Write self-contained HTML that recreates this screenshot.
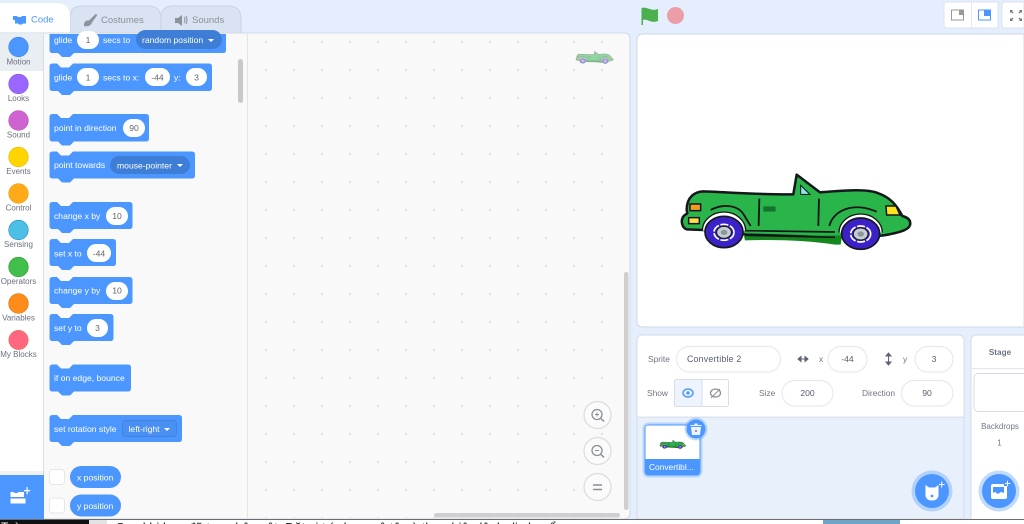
<!DOCTYPE html>
<html><head><meta charset="utf-8"><style>
html,body{margin:0;padding:0;width:1024px;height:524px;overflow:hidden;background:#e4eefc}
svg{display:block;position:absolute;left:0;top:0;filter:blur(.35px)}
text{font-family:"Liberation Sans","Noto Sans CJK SC",sans-serif}
.c{font-size:8px;fill:#6b7080;text-anchor:middle}
.b{font-size:8.6px;fill:#fff}
.n{font-size:8.6px;fill:#666;text-anchor:middle}
.l{font-size:8.4px;fill:#6f7484}
.v{font-size:8.6px;fill:#575e75;text-anchor:middle}
.blk{fill:#4c97ff}
.p{fill:#fff;stroke:none}
.d{fill:#3f7ed6}
.i{fill:#fff;stroke:#e6eaf0;stroke-width:1.2}
</style></head><body>
<svg width="1024" height="524" viewBox="0 0 1024 524">
<defs>
<pattern id="dots" x="0" y="0" width="28" height="28" patternUnits="userSpaceOnUse"><circle cx="14" cy="14" r="1" fill="#d9d9d9"/></pattern>
<g id="car">
  <path d="M50 150C50 110 75 95 100 94C170 96 250 104 370 103L380 44L450 97C520 92 590 85 625 100C660 112 680 135 697 168C712 172 724 180 720 196C714 212 680 220 635 227L505 232L230 224L100 210L50 208C36 204 30 180 42 167L52 160Z" fill="#2ab54b" stroke="#15181a" stroke-width="7.500" stroke-linejoin="round"/>
  <path d="M222 228L225 241C320 238 420 242 495 254L512 254L516 226Z" fill="#14881f"/>
  <path d="M225 212L495 216M225 226L495 232" stroke="#15181a" stroke-width="5" fill="none"/>
  <path d="M268 116L266 198M447 116L445 198M122 150C160 130 205 135 222 165L242 198M478 198C490 150 550 125 620 155" stroke="#15181a" stroke-width="5.500" fill="none"/>
  <path d="M392 76L420 103L392 103Z" fill="#8fe3ee" stroke="#15181a" stroke-width="3"/>
  <rect x="280" y="139" width="37" height="16" rx="2" fill="#14742b"/>
  <rect x="60" y="132" width="32" height="20" fill="#f59a1c" stroke="#15181a" stroke-width="4.500"/>
  <rect x="56" y="173" width="32" height="18" fill="#ffe04a" stroke="#15181a" stroke-width="4.500"/>
  <path d="M648 138L678 138L690 165L650 165Z" fill="#ffe21e" stroke="#15181a" stroke-width="4.500"/>
  <path d="M97 212A65 56 0 0 1 227 212" fill="#fff" stroke="#15181a" stroke-width="4"/>
  <ellipse cx="162" cy="216" rx="57" ry="47" fill="#3a22c8" stroke="#15181a" stroke-width="5"/>
  <ellipse cx="162" cy="217" rx="30" ry="24" fill="none" stroke="#fff" stroke-width="5" stroke-dasharray="24 5"/>
  <ellipse cx="162" cy="217" rx="22" ry="18" fill="#c7ced2" stroke="#15181a" stroke-width="3"/>
  <ellipse cx="162" cy="217" rx="10" ry="8" fill="#8d979c"/>
  <path d="M507 218A65 56 0 0 1 637 218" fill="#fff" stroke="#15181a" stroke-width="4"/>
  <ellipse cx="572" cy="221" rx="57" ry="47" fill="#3a22c8" stroke="#15181a" stroke-width="5"/>
  <ellipse cx="572" cy="222" rx="30" ry="24" fill="none" stroke="#fff" stroke-width="5" stroke-dasharray="24 5"/>
  <ellipse cx="572" cy="222" rx="22" ry="18" fill="#c7ced2" stroke="#15181a" stroke-width="3"/>
  <ellipse cx="572" cy="222" rx="10" ry="8" fill="#8d979c"/>
</g>
</defs>

<!-- tabs -->
<path d="M161 33V18Q161 6 173 6H228Q241 6 241 19V33Z" fill="#d9e3f2" stroke="#c8d3e4"/>
<path d="M70 33V18Q70 6 82 6H148Q161 6 161 19V33Z" fill="#d9e3f2" stroke="#c8d3e4"/>
<path d="M0 34V3H56Q70 3 70 17V34Z" fill="#fff"/>
<path d="M13 16h4l1 1h3l1-1h4v4H13zM15 20h11v3.500h-3l-1 1h-3l-1-1h-3z" fill="#4c97ff"/>
<text x="31" y="22.500" font-size="9.500" fill="#4c97ff">Code</text>
<path d="M84 26C83.500 22 86 20 89 20.500L95 14.500Q97 13.500 97 15.500L92 22.500C91 26 87 27 84 26Z" fill="#8d939c"/>
<text x="101" y="23" font-size="9.500" fill="#8a8f9b">Costumes</text>
<path d="M175 18h3l4-3v11l-4-3h-3z" fill="#8d939c"/><path d="M184 17q2 3 0 6M186 16q2 4 0 8" stroke="#8d939c" fill="none"/>
<text x="192" y="23" font-size="9.500" fill="#8a8f9b">Sounds</text>

<!-- main code panel -->
<path d="M0 33H624Q630 33 630 39V513Q630 519 624 519H0Z" fill="#f9f9f9" stroke="#cfd8e6" stroke-width="1"/>
<rect x="0" y="34" width="43" height="441" fill="#fff"/>
<rect x="0" y="34" width="43" height="37" fill="#e9eef2"/>
<rect x="43" y="34" width="1" height="485" fill="#d9dee6"/>
<rect x="247" y="34" width="1" height="485" fill="#e4e4e4"/>
<rect x="248" y="34" width="381" height="484" fill="url(#dots)"/>

<!-- categories -->
<circle cx="18.500" cy="47" r="9.800" fill="#4c97ff" stroke="#3d85e6" stroke-width=".6"/><text class="c" x="18.500" y="64.500">Motion</text>
<circle cx="18.500" cy="84" r="9.800" fill="#9966ff" stroke="#8855ee" stroke-width=".6"/><text class="c" x="18.500" y="101">Looks</text>
<circle cx="18.500" cy="120.500" r="9.800" fill="#cf63cf" stroke="#bd4fbd" stroke-width=".6"/><text class="c" x="18.500" y="137.500">Sound</text>
<circle cx="18.500" cy="157" r="9.800" fill="#ffd500" stroke="#e8b800" stroke-width=".6"/><text class="c" x="18.500" y="174">Events</text>
<circle cx="18.500" cy="193.500" r="9.800" fill="#ffab19" stroke="#ec9c13" stroke-width=".6"/><text class="c" x="18.500" y="210.500">Control</text>
<circle cx="18.500" cy="230" r="9.800" fill="#4cbfe6" stroke="#2e8eb8" stroke-width=".6"/><text class="c" x="18.500" y="247">Sensing</text>
<circle cx="18.500" cy="267" r="9.800" fill="#40bf4a" stroke="#389438" stroke-width=".6"/><text class="c" x="18.500" y="284">Operators</text>
<circle cx="18.500" cy="303.500" r="9.800" fill="#ff8c1a" stroke="#db6e00" stroke-width=".6"/><text class="c" x="18.500" y="320.500">Variables</text>
<circle cx="18.500" cy="340" r="9.800" fill="#ff6680" stroke="#e64d00" stroke-width=".3"/><text class="c" x="18.500" y="357">My Blocks</text>

<!-- blocks -->
<path class="blk" d="M49.500 34H226V50Q226 53 223 53H74L70 57H62L58 53H52.500Q49.500 53 49.500 50Z"/>
<text class="b" x="54" y="43">glide</text><rect class="p" x="77" y="31" width="22" height="18" rx="9"/><text class="n" x="88" y="43">1</text>
<text class="b" x="103" y="43">secs to</text><rect class="d" x="136" y="30" width="86" height="19" rx="9.500"/><text class="b" x="142" y="43">random position</text><path d="M208 39h6l-3 3z" fill="#fff"/>

<path class="blk" d="M49.500 66.500Q49.500 63.500 52.500 63.500H57L61 67.500H69L73 63.500H209Q212 63.500 212 66.500V88Q212 91 209 91H74L70 95H62L58 91H52.500Q49.500 91 49.500 88Z"/>
<text class="b" x="54" y="80.500">glide</text><rect class="p" x="77" y="68" width="22" height="18" rx="9"/><text class="n" x="88" y="80.500">1</text>
<text class="b" x="103" y="80.500">secs to x:</text><rect class="p" x="145" y="68" width="25" height="18" rx="9"/><text class="n" x="157.500" y="80.500">-44</text>
<text class="b" x="174" y="80.500">y:</text><rect class="p" x="186" y="68" width="21" height="18" rx="9"/><text class="n" x="196.500" y="80.500">3</text>

<path class="blk" d="M49.500 117Q49.500 114 52.500 114H57L61 118H69L73 114H146Q149 114 149 117V138.500Q149 141.500 146 141.500H74L70 145.500H62L58 141.500H52.500Q49.500 141.500 49.500 138.500Z"/>
<text class="b" x="54" y="131">point in direction</text><rect class="p" x="123" y="119" width="22" height="18" rx="9"/><text class="n" x="134" y="131">90</text>

<path class="blk" d="M49.500 154.500Q49.500 151.500 52.500 151.500H57L61 155.500H69L73 151.500H192Q195 151.500 195 154.500V175.500Q195 178.500 192 178.500H74L70 182.500H62L58 178.500H52.500Q49.500 178.500 49.500 175.500Z"/>
<text class="b" x="54" y="168">point towards</text><rect class="d" x="110" y="156" width="80" height="18" rx="9"/><text class="b" x="117" y="168.500">mouse-pointer</text><path d="M177 164h6l-3 3z" fill="#fff"/>

<path class="blk" d="M49.500 205Q49.500 202 52.500 202H57L61 206H69L73 202H129.500Q132.500 202 132.500 205V226Q132.500 229 129.500 229H74L70 233H62L58 229H52.500Q49.500 229 49.500 226Z"/>
<text class="b" x="54" y="219">change x by</text><rect class="p" x="106" y="207" width="22" height="18" rx="9"/><text class="n" x="117" y="219">10</text>

<path class="blk" d="M49.500 242Q49.500 239 52.500 239H57L61 243H69L73 239H113Q116 239 116 242V263Q116 266 113 266H74L70 270H62L58 266H52.500Q49.500 266 49.500 263Z"/>
<text class="b" x="54" y="256.500">set x to</text><rect class="p" x="87" y="244" width="24" height="18" rx="9"/><text class="n" x="99" y="256.500">-44</text>

<path class="blk" d="M49.500 280Q49.500 277 52.500 277H57L61 281H69L73 277H129.500Q132.500 277 132.500 280V301Q132.500 304 129.500 304H74L70 308H62L58 304H52.500Q49.500 304 49.500 301Z"/>
<text class="b" x="54" y="293.500">change y by</text><rect class="p" x="106" y="282" width="22" height="18" rx="9"/><text class="n" x="117" y="293.500">10</text>

<path class="blk" d="M49.500 317Q49.500 314 52.500 314H57L61 318H69L73 314H110.500Q113.500 314 113.500 317V338Q113.500 341 110.500 341H74L70 345H62L58 341H52.500Q49.500 341 49.500 338Z"/>
<text class="b" x="54" y="331">set y to</text><rect class="p" x="87" y="319" width="21" height="18" rx="9"/><text class="n" x="97.500" y="331">3</text>

<path class="blk" d="M49.500 367.500Q49.500 364.500 52.500 364.500H57L61 368.500H69L73 364.500H128Q131 364.500 131 367.500V388.500Q131 391.500 128 391.500H74L70 395.500H62L58 391.500H52.500Q49.500 391.500 49.500 388.500Z"/>
<text class="b" x="54" y="381">if on edge, bounce</text>

<path class="blk" d="M49.500 418Q49.500 415 52.500 415H57L61 419H69L73 415H179Q182 415 182 418V439Q182 442 179 442H74L70 446H62L58 442H52.500Q49.500 442 49.500 439Z"/>
<text class="b" x="54" y="432">set rotation style</text><rect x="122.500" y="420.500" width="54" height="16" rx="3" fill="#4a8ff2" stroke="#3f7ed6" stroke-width=".7"/><text class="b" x="128.500" y="432">left-right</text><path d="M164 428h6l-3 3z" fill="#fff"/>

<rect x="49.500" y="469.500" width="15" height="15" rx="3" fill="#fff" stroke="#e3e6ea"/>
<rect x="70" y="466" width="51" height="22" rx="11" fill="#4c97ff"/><text class="b" x="77" y="480.500">x position</text>
<rect x="49.500" y="498" width="15" height="15" rx="3" fill="#fff" stroke="#e3e6ea"/>
<rect x="70" y="494.500" width="51" height="22" rx="11" fill="#4c97ff"/><text class="b" x="77" y="509">y position</text>

<!-- scrollbars -->
<rect x="238" y="59" width="5" height="44" rx="2.500" fill="#c9c9c9"/>
<rect x="624" y="272" width="4.500" height="238" rx="2.200" fill="#cfcfcf"/>
<rect x="434" y="513" width="186" height="4.500" rx="2.200" fill="#cfcfcf"/>

<!-- ghost car -->
<g opacity=".5" transform="translate(574 49) scale(.0545)"><use href="#car"/></g>

<!-- zoom buttons -->
<circle cx="597.500" cy="415" r="13.500" fill="#fbfbfb" stroke="#dcdcdc" stroke-width="1.200"/>
<circle cx="597" cy="414.500" r="5" fill="none" stroke="#8a8f98" stroke-width="1.300"/><path d="M601 418.500l3 3" stroke="#8a8f98" stroke-width="1.500"/><path d="M595 414.500h4M597 412.500v4" stroke="#8a8f98"/>
<circle cx="597.500" cy="451" r="13.500" fill="#fbfbfb" stroke="#dcdcdc" stroke-width="1.200"/>
<circle cx="597" cy="450.500" r="5" fill="none" stroke="#8a8f98" stroke-width="1.300"/><path d="M601 454.500l3 3" stroke="#8a8f98" stroke-width="1.500"/><path d="M595 450.500h4" stroke="#8a8f98"/>
<circle cx="597.500" cy="487" r="13.500" fill="#fbfbfb" stroke="#dcdcdc" stroke-width="1.200"/>
<path d="M593 485h9M593 489.500h9" stroke="#8a8f98" stroke-width="1.400"/>

<!-- extension button -->
<rect x="0" y="471" width="44" height="4" fill="#000" opacity=".05"/>
<rect x="0" y="475" width="44" height="44" fill="#4c97ff"/>
<path d="M10.500 492h3l1 1h3l1-1h5.500v5H10.500zM10.500 498.500h15v5H10.500z" fill="#fff"/>
<path d="M24 490h2.500v-3h1.200v3h2.500v1.200h-2.500v3h-1.200v-3H24z" fill="#fff"/>

<!-- top controls -->
<path d="M642 8C647 6 651 12 658 9V21C651 24 647 18 643 20V25H641.500V8Z" fill="#4cb050"/>
<circle cx="675.500" cy="15.500" r="8.500" fill="#ec9ea8"/>
<path d="M944 5Q944 2 947 2H998V28H947Q944 28 944 25Z" fill="#fff" stroke="#dbe4f2"/>
<rect x="971" y="2" width="1" height="26" fill="#e3e9f3"/>
<rect x="951.500" y="10" width="12" height="10" fill="#fff" stroke="#999" stroke-width="1"/><rect x="959" y="10" width="4.500" height="5" fill="#999"/>
<rect x="978.500" y="10" width="12" height="10" fill="#fff" stroke="#4c97ff" stroke-width="1"/><rect x="984" y="10" width="6.500" height="6" fill="#4c97ff"/>
<path d="M1005 2H1024V28H1005Q1002 28 1002 25V5Q1002 2 1005 2Z" fill="#fff" stroke="#dbe4f2"/>
<path d="M1010 10h3l-1 1 1.500 1.500-1 1L1011 12l-1 1zM1022 10h-3l1 1-1.500 1.500 1 1L1021 12l1 1zM1010 21h3l-1-1 1.500-1.500-1-1L1011 19l-1-1zM1022 21h-3l1-1-1.500-1.500 1-1L1021 19l1-1z" fill="#777"/>

<!-- stage -->
<path d="M1024 34H643Q637 34 637 40V321Q637 327 643 327H1024Z" fill="#fff" stroke="#cfd8e6"/>
<use href="#car" transform="translate(670 160) scale(.3333)"/>

<!-- sprite panel -->
<path d="M637 519V341Q637 335 643 335H958Q964 335 964 341V519Z" fill="#e8f0fc" stroke="#d3dcea"/>
<path d="M637.500 417V341Q637.500 335.500 643 335.500H958Q963.500 335.500 963.500 341V417Z" fill="#fff"/>
<rect x="637" y="416.500" width="327" height="1.500" fill="#dde4ef"/>
<text class="l" x="648" y="362">Sprite</text>
<rect class="i" x="676.500" y="346.500" width="104" height="25.500" rx="12.700"/><text x="687" y="362" font-size="8.800" fill="#575e75" letter-spacing=".2">Convertible 2</text>
<path d="M798 359h10M798 359l3-2.500v5zM808 359l-3-2.500v5z" fill="#5d6372" stroke="#5d6372"/>
<text class="l" x="819" y="362">x</text>
<rect class="i" x="828" y="346.500" width="39" height="25.500" rx="12.700"/><text class="v" x="847.500" y="362">-44</text>
<path d="M888.500 354v10M888.500 353l-2.500 3h5zM888.500 365l-2.500-3h5z" fill="#5d6372" stroke="#5d6372"/>
<text class="l" x="903" y="362">y</text>
<rect class="i" x="915" y="346.500" width="38" height="25.500" rx="12.700"/><text class="v" x="934" y="362">3</text>
<text class="l" x="647" y="396">Show</text>
<rect x="674.500" y="379.500" width="54" height="27" rx="2" fill="#fff" stroke="#d8dde6"/>
<rect x="674.500" y="379.500" width="27.500" height="27" rx="2" fill="#eef4fe" stroke="#d8dde6"/>
<ellipse cx="688" cy="393" rx="5" ry="4" fill="none" stroke="#4c97ff" stroke-width="1.500"/><circle cx="688" cy="393" r="1.700" fill="#4c97ff"/>
<ellipse cx="715.500" cy="393" rx="5" ry="4" fill="none" stroke="#8a8f98" stroke-width="1.300"/><path d="M711 398l9-9" stroke="#8a8f98"/>
<text class="l" x="759" y="396">Size</text>
<rect class="i" x="782" y="380.500" width="51" height="25.500" rx="12.700"/><text class="v" x="807.500" y="396">200</text>
<text class="l" x="862" y="396">Direction</text>
<rect class="i" x="901.500" y="380.500" width="51.500" height="25.500" rx="12.700"/><text class="v" x="927" y="396">90</text>

<!-- sprite thumb -->
<rect x="642.500" y="422.500" width="60" height="55" rx="6" fill="#4c97ff" fill-opacity=".3"/>
<rect x="644.500" y="424.500" width="56" height="51" rx="4" fill="#4c97ff"/>
<path d="M645.500 459V428Q645.500 425.500 648 425.500H697Q699.500 425.500 699.500 428V459Z" fill="#fff"/>
<g transform="translate(658.500 438.500) scale(.0378)"><use href="#car"/></g>
<text x="649" y="470" font-size="8.400" fill="#fff">Convertibl...</text>
<circle cx="696" cy="429" r="11.500" fill="#4c97ff" fill-opacity=".35"/>
<circle cx="696" cy="429" r="9.500" fill="#4c97ff"/>
<path d="M691 427h10l-1 8h-8zM690.500 425h11v1h-11zM694.500 423.500h3v1.500h-3z" fill="#fff" opacity=".9"/>
<circle cx="696" cy="431" r="1" fill="#9a4ccf"/>

<!-- add sprite -->
<circle cx="932" cy="491" r="20.500" fill="#4c97ff" fill-opacity=".35"/>
<circle cx="932" cy="491" r="17" fill="#4c97ff"/>
<path d="M925.500 485l3.500 2.500h6l3.500-2.500v11q-1 4.500-6.500 4.500t-6.500-4.500z" fill="#fff"/><circle cx="932" cy="496" r="1.400" fill="#4c97ff"/>
<path d="M939 484h2.200v-2.500h1v2.500h2.300v1h-2.300v2.500h-1v-2.500h-2.200z" fill="#fff"/>

<!-- stage panel -->
<path d="M1024 335H977Q971 335 971 341V519H1024Z" fill="#e8f0fc" stroke="#d3dcea"/>
<path d="M1024 335.500H977Q971.500 335.500 971.500 341V519H1024Z" fill="#fff"/>
<rect x="971" y="368" width="53" height="1.200" fill="#e3e8f0"/>
<text x="1000" y="355" font-size="8.200" fill="#575e75" text-anchor="middle" font-weight="bold" opacity=".85">Stage</text>
<rect x="974" y="373.500" width="60" height="38" rx="4" fill="#fff" stroke="#d5dbe4"/>
<text x="1000" y="429" font-size="8" fill="#70768a" text-anchor="middle">Backdrops</text>
<text x="999.500" y="445.500" font-size="8" fill="#70768a" text-anchor="middle">1</text>
<circle cx="999" cy="491" r="20.500" fill="#4c97ff" fill-opacity=".35"/>
<circle cx="999" cy="491" r="17" fill="#4c97ff"/>
<path d="M991 486q0-2 2-2h11v2h3v11q0 2-2 2H993q-2 0-2-2z" fill="#fff"/><path d="M993 487h11v6l-3-1-3 2-3-2-2 1z" fill="#4c97ff"/>
<path d="M1005 483h2v-2.200h1v2.200h2.200v1h-2.200v2.200h-1v-2.200h-2z" fill="#fff"/>

<!-- bottom strip -->
<rect x="0" y="519" width="1024" height="5" fill="#fff"/>
<rect x="0" y="519" width="1024" height="1" fill="#6d6d6d"/>
<rect x="0" y="520" width="89" height="4" fill="#111"/>
<text x="1" y="531" font-size="12" fill="#fff">Toàn</text>
<rect x="89" y="520" width="18" height="4" fill="#e3e3e3"/>
<text x="116" y="532" font-size="13" fill="#222">Sau khi bạn đã tạo nhân vật. Đặt vị trí cho xe ô tô và thực hiện lệnh di chuyển</text>
<rect x="823" y="520" width="77" height="4" fill="#6ea4c8"/>
</svg>
</body></html>
